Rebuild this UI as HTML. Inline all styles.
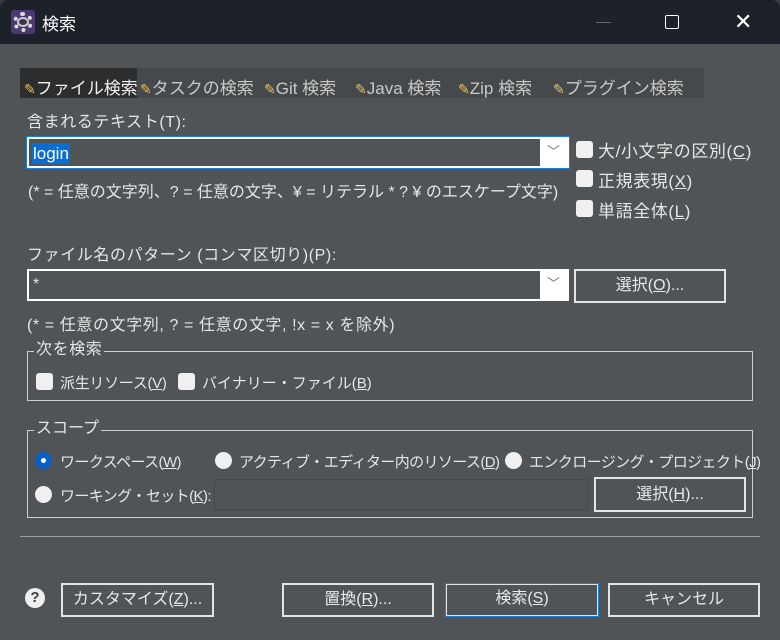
<!DOCTYPE html>
<html><head><meta charset="utf-8"><style>
*{margin:0;padding:0;box-sizing:border-box}
body{width:780px;height:640px;background:#3a3d40;font-family:"Liberation Sans","Noto Sans CJK JP",sans-serif;font-size:16px;color:#e6e6e6;position:relative;overflow:hidden}
.win{position:absolute;left:0;top:0;width:780px;height:640px;background:#505457;border-radius:8px 8px 0 0;overflow:hidden}
.a{position:absolute;white-space:nowrap}
.title{left:0;top:0;width:780px;height:44px;background:#1c212a}
.cb{position:absolute;width:17px;height:17px;background:#f0f0f0;border-radius:3px}
.rb{position:absolute;width:17px;height:17px;background:#f0f0f0;border-radius:50%}
.btn{position:absolute;border:2px solid #e4e4e4;text-align:center;line-height:29px;color:#e8e8e8}
.combo{position:absolute;border:2px solid #fff;background:#505457}
.combo .dd{position:absolute;right:0;top:0;width:27px;height:100%;background:#fff;color:#777;font-size:13px;text-align:center;line-height:26px}
.grp{position:absolute;border:1px solid #cfcfcf}
.grp .lg{position:absolute;top:-11px;left:6px;background:#505457;padding:0 2px;line-height:18px}
.sp{letter-spacing:0.6px}
.sc{font-size:15px;letter-spacing:-0.6px}
.tab{position:absolute;top:74px;font-size:17px;color:#c8c8c8;white-space:nowrap}
.ic{color:#e8c060;font-size:14px}
u{text-decoration:underline}
</style></head><body>
<div class="win">
<div class="a title"></div>
<div class="a" style="left:11px;top:10px;width:24px;height:24px;background:#4a3a70;border-radius:3px"></div>
<div class="a" style="left:13px;top:12px;width:20px;height:20px;border:4px dotted #ddd;border-radius:50%"></div>
<div class="a" style="left:17px;top:17px;width:12px;height:10px;background:#3b3550;border-radius:50%;border:2px solid #ccc"></div>
<div class="a" style="left:42px;top:10px;font-size:17px;color:#fff">検索</div>
<div class="a" style="left:596px;top:22px;width:15px;height:1px;background:#666"></div>
<div class="a" style="left:665px;top:15px;width:14px;height:14px;border:1.5px solid #fff;border-radius:2px"></div>
<div class="a" style="left:734px;top:10px;font-size:22px;color:#fff;line-height:24px">✕</div>

<div class="a" style="left:20px;top:68px;width:684px;height:30px;background:#45494b"></div>
<div class="a" style="left:20px;top:68px;width:117px;height:30px;background:#2b2d2f"></div>
<div class="tab" style="left:24px;color:#f0f0f0"><span class="ic">✎</span>ファイル検索</div>
<div class="tab" style="left:140px"><span class="ic">✎</span>タスクの検索</div>
<div class="tab" style="left:264px"><span class="ic">✎</span>Git 検索</div>
<div class="tab" style="left:355px"><span class="ic">✎</span>Java 検索</div>
<div class="tab" style="left:458px"><span class="ic">✎</span>Zip 検索</div>
<div class="tab" style="left:553px"><span class="ic">✎</span>プラグイン検索</div>

<div class="a sp" style="left:27px;top:108px">含まれるテキスト(T):</div>
<div class="a" style="left:26px;top:136px;width:544px;height:33px;border:1px solid #1a7fd6"></div>
<div class="combo" style="left:27px;top:137px;width:542px;height:31px"><div class="dd">﹀</div>
<span class="a" style="left:3px;top:4px;background:#0a6ed1;color:#fff;padding:0 1px;font-size:17px;line-height:21px">login</span></div>
<div class="cb" style="left:576px;top:141px"></div><div class="a sp" style="left:598px;top:137px;font-size:17px">大/小文字の区別(<u>C</u>)</div>
<div class="cb" style="left:576px;top:170px"></div><div class="a sp" style="left:598px;top:167px;font-size:17px">正規表現(<u>X</u>)</div>
<div class="cb" style="left:576px;top:200px"></div><div class="a sp" style="left:598px;top:197px;font-size:17px">単語全体(<u>L</u>)</div>
<div class="a" style="left:28px;top:178px">(* = 任意の文字列、? = 任意の文字、¥ = リテラル * ? ¥ のエスケープ文字)</div>

<div class="a sp" style="left:27px;top:241px">ファイル名のパターン (コンマ区切り)(P):</div>
<div class="combo" style="left:27px;top:269px;width:542px;height:32px"><div class="dd">﹀</div><span class="a" style="left:4px;top:5px">*</span></div>
<div class="btn" style="left:574px;top:269px;width:152px;height:34px">選択(<u>O</u>)...</div>
<div class="a sp" style="left:27px;top:311px">(* = 任意の文字列, ? = 任意の文字, !x = x を除外)</div>

<div class="grp" style="left:27px;top:351px;width:726px;height:50px"><span class="lg sp">次を検索</span></div>
<div class="cb" style="left:36px;top:373px"></div><div class="a" style="left:60px;top:372px;font-size:15px;letter-spacing:-0.3px">派生リソース(<u>V</u>)</div>
<div class="cb" style="left:178px;top:373px"></div><div class="a" style="left:202px;top:372px;font-size:15px">バイナリー・ファイル(<u>B</u>)</div>

<div class="grp" style="left:27px;top:430px;width:726px;height:88px"><span class="lg">スコープ</span></div>
<div class="rb" style="left:35px;top:452px;background:#0a5fc4"></div><div class="a" style="left:41px;top:458px;width:5px;height:5px;background:#fff;border-radius:50%"></div>
<div class="a sc" style="left:60px;top:451px">ワークスペース(<u>W</u>)</div>
<div class="rb" style="left:215px;top:452px"></div><div class="a sc" style="left:239px;top:451px">アクティブ・エディター内のリソース(<u>D</u>)</div>
<div class="rb" style="left:505px;top:452px"></div><div class="a sc" style="left:529px;top:451px">エンクロージング・プロジェクト(<u>J</u>)</div>
<div class="rb" style="left:35px;top:486px"></div><div class="a sc" style="left:60px;top:485px">ワーキング・セット(<u>K</u>):</div>
<div class="a" style="left:214px;top:479px;width:374px;height:31px;border:1px solid #46494b"></div>
<div class="btn" style="left:594px;top:477px;width:152px;height:35px;line-height:31px">選択(<u>H</u>)...</div>

<div class="a" style="left:20px;top:536px;width:740px;height:1px;background:#9a9c9e"></div>

<div class="a" style="left:25px;top:588px;width:20px;height:20px;border-radius:50%;background:#f0f0f0;color:#3a3d40;font-weight:bold;text-align:center;line-height:20px;font-size:15px">?</div>
<div class="btn" style="left:61px;top:583px;width:153px;height:34px">カスタマイズ(<u>Z</u>)...</div>
<div class="btn" style="left:282px;top:583px;width:152px;height:34px">置換(<u>R</u>)...</div>
<div class="btn" style="left:445px;top:583px;width:154px;height:34px;border:1px solid #1a7fd6;box-shadow:inset 0 0 0 1px #e4e4e4">検索(<u>S</u>)</div>
<div class="btn" style="left:608px;top:583px;width:152px;height:34px">キャンセル</div>
</div>
</body></html>
